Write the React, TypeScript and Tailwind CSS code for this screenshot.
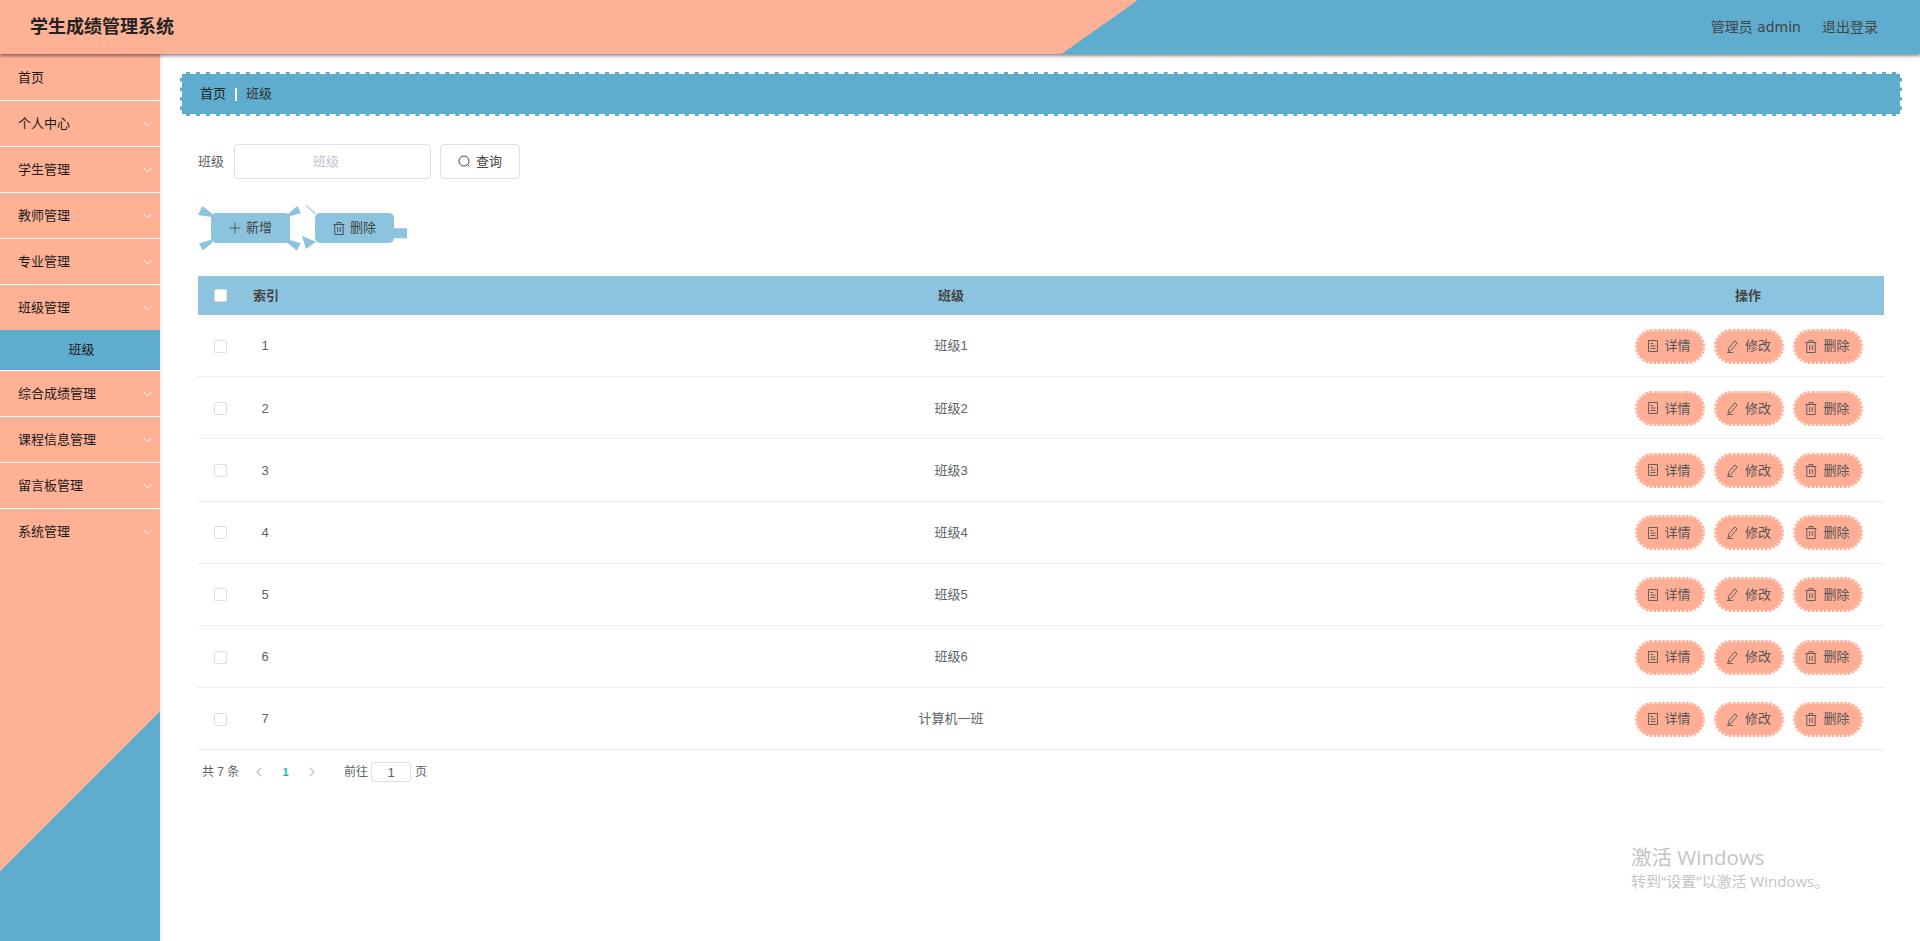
import React from "react";

const menus = [
  { name: "首页", arrow: false },
  { name: "个人中心", arrow: true },
  { name: "学生管理", arrow: true },
  { name: "教师管理", arrow: true },
  { name: "专业管理", arrow: true },
  { name: "班级管理", arrow: true, sub: "班级" },
  { name: "综合成绩管理", arrow: true },
  { name: "课程信息管理", arrow: true },
  { name: "留言板管理", arrow: true },
  { name: "系统管理", arrow: true },
];

const rows = [
  { id: 1, name: "班级1" },
  { id: 2, name: "班级2" },
  { id: 3, name: "班级3" },
  { id: 4, name: "班级4" },
  { id: 5, name: "班级5" },
  { id: 6, name: "班级6" },
  { id: 7, name: "计算机一班" },
];

function ChevronDown() {
  return (
    <svg viewBox="0 0 10 6" className="w-[9px] h-[6px] text-white" fill="none" stroke="currentColor" strokeWidth="1.1">
      <path d="M0.8 0.8 5 5 9.2 0.8" />
    </svg>
  );
}

function PageArrow({ d }: { d: string }) {
  return (
    <svg viewBox="0 0 6 10" className="w-[6px] h-[10px] text-[#c0c4cc]" fill="none" stroke="currentColor" strokeWidth="1.4">
      <path d={d} />
    </svg>
  );
}

function PlusIcon() {
  return (
    <svg viewBox="0 0 12 12" className="w-[12px] h-[12px]" fill="none" stroke="currentColor" strokeWidth="0.8">
      <path d="M6 0.5v11M0.5 6h11" />
    </svg>
  );
}

function SearchIcon() {
  return (
    <svg viewBox="0 0 13 13" className="w-[13px] h-[13px]" fill="none" stroke="currentColor" strokeWidth="1">
      <circle cx="6" cy="6" r="5" />
      <path d="M9.6 9.6 11.6 11.6" />
    </svg>
  );
}

function TrashIcon() {
  return (
    <svg viewBox="0 0 12 13" className="w-[12px] h-[13px]" fill="none" stroke="currentColor" strokeWidth="0.9">
      <path d="M0.5 2.5h11M4 2.5V0.5h4v2M1.8 2.5v10h8.4v-10M4.7 5v5M7.3 5v5" />
    </svg>
  );
}

function DocIcon() {
  return (
    <svg viewBox="0 0 10 12" className="w-[10px] h-[12px]" fill="none" stroke="currentColor" strokeWidth="0.9">
      <path d="M0.5 0.5h9v11h-9zM2.5 3.5h2.5M2.5 6h5M2.5 8.5h5" />
    </svg>
  );
}

function EditIcon() {
  return (
    <svg viewBox="0 0 13 13" className="w-[13px] h-[13px]" fill="none" stroke="currentColor" strokeWidth="0.9">
      <path d="M8.8 0.9 11.2 3 5 10.2 2.2 11.4 2.6 8.2zM1 12.5h6" />
    </svg>
  );
}

function RowButton({ icon, label }: { icon: React.ReactNode; label: string }) {
  return (
    <button
      type="button"
      className="w-[70px] h-[35px] flex items-center justify-center gap-[6px] rounded-[20px] border-2 border-dotted border-[#ffe6dd] bg-[#ffae96] text-[13px] text-[#555]"
    >
      {icon}
      <span>{label}</span>
    </button>
  );
}

function CheckBox() {
  return <span className="block w-[13px] h-[13px] rounded-[2px] border border-[#dcdfe6] bg-white" />;
}

export default function App() {
  return (
    <div className="h-screen overflow-hidden flex flex-col bg-white font-['Liberation_Sans','Noto_Sans_CJK_SC',sans-serif]">
      <header className="relative z-10 h-[54px] shrink-0 flex items-center justify-between pl-[30px] pr-[42px] shadow-[0_2px_3px_rgba(0,0,0,0.45)] bg-[linear-gradient(144.8deg,#ffb196_656px,#5eacce_656px)]">
        <div className="text-[18px] font-bold text-[#222]">学生成绩管理系统</div>
        <div className="flex items-center gap-[21px] text-[14px] text-[#444]">
          <span className="font-['DejaVu_Sans','Noto_Sans_CJK_SC',sans-serif]">管理员 admin</span>
          <span>退出登录</span>
        </div>
      </header>

      <div className="flex flex-1 min-h-0">
        <aside className="w-[160px] shrink-0 pt-px shadow-[1px_0_3px_rgba(0,0,0,0.12)] bg-[linear-gradient(135deg,#ffb196_578px,#5eacce_578px)]">
          {menus.map((m, i) => (
            <div key={m.name}>
              <div
                className={
                  i === menus.length - 1 || m.sub
                    ? "h-[45px] flex items-center justify-between pl-[18px] pr-[8px] text-[13px] text-[#1a1a1a]"
                    : "h-[46px] flex items-center justify-between pl-[18px] pr-[8px] text-[13px] text-[#1a1a1a] border-b border-white"
                }
              >
                <span>{m.name}</span>
                {m.arrow && <ChevronDown />}
              </div>
              {m.sub && (
                <div className="h-[41px] flex items-center justify-center pl-[3px] border-b border-white bg-[#5eacce] text-[13px] text-[#1a1a1a]">
                  {m.sub}
                </div>
              )}
            </div>
          ))}
        </aside>

        <main className="flex-1 min-w-0 pt-[18px] pl-[20px] pr-[18px]">
          <div className="h-[44px] flex items-center px-[18px] border-2 border-dashed border-white bg-[#5eacce] text-[13px]">
            <span className="text-[#222]">首页</span>
            <span className="w-[2px] h-[13px] bg-white mx-[9px]" />
            <span className="text-[#333]">班级</span>
          </div>

          <div className="px-[18px]">
            <div className="mt-[28px] flex items-center h-[35px]">
              <label className="w-[36px] text-[13px] text-[#606266]">班级</label>
              <div className="w-[197px] h-[35px] flex items-center justify-center pr-[13px] rounded-[4px] border border-[#dcdfe6] text-[13px] text-[#c0c4cc]">
                班级
              </div>
              <button
                type="button"
                className="ml-[9px] w-[80px] h-[35px] flex items-center justify-center gap-[5px] rounded-[4px] border border-[#dcdfe6] bg-white text-[13px] text-[#444]"
              >
                <SearchIcon />
                <span>查询</span>
              </button>
            </div>

            <div className="mt-[34px] flex items-center pl-[13px] gap-[25px]">
              <div className="relative">
                <svg
                  viewBox="198 205 105 46"
                  className="absolute -left-[13px] -top-[8px] w-[105px] h-[46px] text-[#8cc3de]"
                  fill="currentColor"
                >
                  <path d="M198 215 202.3 206 212 213.5 212 217zM288 214 297.3 206 301 213 288 217zM199 243.5 212 239.5 212 243 202.7 250.5zM287.5 239.5 300.7 243 296.7 250.5 287.5 243z" />
                </svg>
                <button
                  type="button"
                  className="relative w-[79px] h-[30px] flex items-center justify-center gap-[5px] rounded-[5px] bg-[#8cc3de] text-[13px] text-[#444]"
                >
                  <PlusIcon />
                  <span>新增</span>
                </button>
              </div>
              <div className="relative">
                <svg
                  viewBox="300 205 110 46"
                  className="absolute -left-[15px] -top-[8px] w-[110px] h-[46px] text-[#8cc3de]"
                  fill="currentColor"
                >
                  <path d="M306.4 205.2 316 213.6 315.4 214.4 305.8 206zM302 236 316 241.7 306 249zM393 228.3h14v10h-14z" />
                </svg>
                <button
                  type="button"
                  className="relative w-[79px] h-[30px] flex items-center justify-center gap-[5px] rounded-[5px] bg-[#8cc3de] text-[13px] text-[#444]"
                >
                  <TrashIcon />
                  <span>删除</span>
                </button>
              </div>
            </div>

            <div className="mt-[33px]">
              <div className="h-[39px] flex items-center bg-[#8cc3de] text-[13px] font-bold text-[#444]">
                <div className="w-[44px] flex justify-center pl-[1px]">
                  <CheckBox />
                </div>
                <div className="w-[48px] text-center">索引</div>
                <div className="flex-1 text-center">班级</div>
                <div className="w-[272px] text-center">操作</div>
              </div>
              {rows.map((r) => (
                <div key={r.id} className="h-[62.2px] flex items-center pt-px border-b border-[#ebeef5] text-[13px] text-[#606266]">
                  <div className="w-[44px] flex justify-center pl-[1px]">
                    <CheckBox />
                  </div>
                  <div className="w-[48px] text-center pr-[2px]">{r.id}</div>
                  <div className="flex-1 text-center">{r.name}</div>
                  <div className="w-[272px] flex justify-center gap-[9px] pl-[1px]">
                    <RowButton icon={<DocIcon />} label="详情" />
                    <RowButton icon={<EditIcon />} label="修改" />
                    <RowButton icon={<TrashIcon />} label="删除" />
                  </div>
                </div>
              ))}
            </div>

            <div className="mt-[12px] h-[20px] flex items-center pl-[4px] text-[12px] text-[#606266]">
              <span className="w-[54px]">共 7 条</span>
              <PageArrow d="M5 1 1 5l4 4" />
              <span className="w-[47px] text-center text-[11px] font-bold text-[#00c4a0]">1</span>
              <PageArrow d="M1 1l4 4-4 4" />
              <span className="ml-[29px]">前往</span>
              <div className="ml-[3px] w-[40px] h-[20px] flex items-center justify-center rounded-[3px] border border-[#dcdfe6] text-[13px]">1</div>
              <span className="ml-[4px]">页</span>
            </div>
          </div>
        </main>
      </div>

      <div className="absolute left-[1631px] top-[843px] text-[#c4c4c4] font-['Open_Sans','Noto_Sans_CJK_SC',sans-serif]">
        <div className="text-[20.5px] leading-[28px]">激活 Windows</div>
        <div className="text-[15px] leading-[20px]">转到“设置”以激活 Windows。</div>
      </div>
    </div>
  );
}
